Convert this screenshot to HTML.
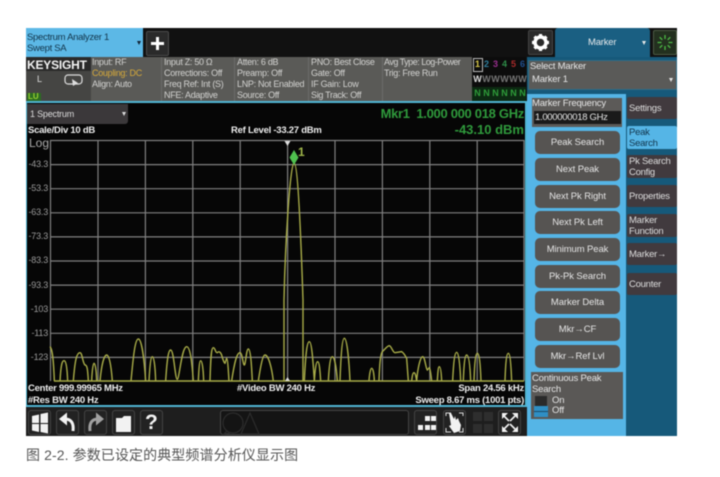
<!DOCTYPE html>
<html><head><meta charset="utf-8"><style>
html,body{margin:0;padding:0;background:#fff}
body{width:720px;height:477px;overflow:hidden;position:relative;font-family:"Liberation Sans","Noto Sans CJK SC",sans-serif}
#s{position:absolute;left:0;top:0;width:720px;height:477px;filter:blur(.45px)}
.b{position:absolute}
.t{position:absolute;white-space:nowrap;line-height:1}
.i{font-size:9px;color:#d2d2d0;letter-spacing:-.3px}
.l{font-size:9px;color:#9a9a9a;text-align:right;width:30px;left:18px;letter-spacing:-.2px}
.w{font-size:9.5px;font-weight:bold;color:#eee;letter-spacing:-.25px}
.p{font-size:9.5px;color:#e6e6e6;letter-spacing:-.2px}
.btn{position:absolute;left:535px;width:85px;height:23px;background:#565452;border-radius:5px;color:#e4e4e4;font-size:9.5px;letter-spacing:-.1px;line-height:23px;text-align:center}
.tab{position:absolute;left:627px;width:50px;background:#413a3e;border-radius:2px;color:#ddd;font-size:9.5px;letter-spacing:-.25px;line-height:11px;box-sizing:border-box;padding-left:2px;display:flex;align-items:center}
.tb{position:absolute;top:410px;height:25px;background:#222;border:1px solid #444;border-radius:3px;box-sizing:border-box}
.n{position:absolute;font-size:9px;font-weight:bold;line-height:1;width:9px;text-align:center}
</style></head><body><div id="s">
<div class="b" style="left:26px;top:28px;width:651px;height:408px;background:#111"></div>
<!-- top bar -->
<div class="b" style="left:26px;top:28px;width:117px;height:29px;background:#5cb8e6"></div>
<div class="t" style="left:27px;top:32px;font-size:9.5px;letter-spacing:-.3px;color:#12344a;line-height:11px">Spectrum Analyzer 1<br>Swept SA</div>
<div class="b" style="left:137px;top:41px;width:0;height:0;border:2.5px solid transparent;border-top:4px solid #123;"></div>
<div class="b" style="left:146px;top:31px;width:23px;height:25px;background:#2a2a2a;border:1px solid #4a4a4a;box-sizing:border-box;border-radius:2px"></div>
<div class="b" style="left:151px;top:42px;width:13px;height:3px;background:#fff"></div>
<div class="b" style="left:156px;top:37px;width:3px;height:13px;background:#fff"></div>
<div class="b" style="left:528px;top:30px;width:25px;height:25px;background:#2a2a2a;border:1px solid #444;box-sizing:border-box;border-radius:2px"></div>
<svg class="b" style="left:528px;top:30px" width="25" height="25" viewBox="0 0 25 25"><circle cx="12.5" cy="12.500" r="5.500" fill="none" stroke="#fff" stroke-width="3.500"/><g stroke="#fff" stroke-width="3.200"><path d="M12.500 4v3M12.500 18v3M4 12.500h3M18 12.500h3M6.500 6.500l2.200 2.200M16.300 16.300l2.200 2.200M6.500 18.500l2.200-2.200M16.300 8.700l2.200-2.200"/></g></svg>
<div class="b" style="left:555px;top:28px;width:95px;height:29px;background:#1a5f82;border-radius:3px 3px 0 0"></div>
<div class="t p" style="left:588px;top:38px;color:#e4e8ea">Marker</div>
<div class="b" style="left:642px;top:41px;width:0;height:0;border:2.5px solid transparent;border-top:4px solid #e8e8e8"></div>
<div class="b" style="left:653px;top:30px;width:24px;height:25px;background:#23301f;border:1px solid #4c5a44;box-sizing:border-box;border-radius:2px"></div>
<svg class="b" style="left:653px;top:30px" width="24" height="25" viewBox="0 0 24 25"><g stroke="#4dbb45" stroke-width="1.300"><path d="M12 5v4M12 16v4M4.500 12.500h4M15.500 12.500h4M6.700 7.200l2.600 2.600M14.700 15.200l2.600 2.600M6.700 17.800l2.600-2.600M14.700 9.800l2.600-2.600"/></g></svg>
<!-- info bar -->
<div class="b" style="left:26px;top:57px;width:446px;height:44px;background:#5a5a57"></div>
<div class="b" style="left:26px;top:57px;width:65px;height:44px;background:#454543"></div>
<div class="b" style="left:26px;top:57px;width:65px;height:14px;background:#2a2a2a"></div>
<div class="t" style="left:27px;top:59px;font-size:12px;font-weight:bold;color:#f2f2f2;letter-spacing:-.2px">KEYSIGHT</div>
<div class="t" style="left:37px;top:75px;font-size:9px;color:#ddd">L</div>
<svg class="b" style="left:64px;top:73px" width="20" height="15"><rect x="1" y="2" width="17" height="9" rx="3" fill="none" stroke="#ddd" stroke-width="1.200"/><path d="M8 6l6 4-5 3z" fill="#ddd"/></svg>
<div class="b" style="left:27px;top:93px;width:14px;height:8px;background:#2c6b22"></div>
<div class="t" style="left:28px;top:93px;font-size:8px;color:#9bd02f;font-weight:bold">LU</div>
<div class="b" style="left:161px;top:57px;width:1px;height:44px;background:#6c6c6a"></div>
<div class="b" style="left:234px;top:57px;width:1px;height:44px;background:#6c6c6a"></div>
<div class="b" style="left:308px;top:57px;width:1px;height:44px;background:#6c6c6a"></div>
<div class="b" style="left:382px;top:57px;width:1px;height:44px;background:#6c6c6a"></div>
<div class="t i" style="left:92px;top:58px">Input: RF</div>
<div class="t i" style="left:92px;top:69px;color:#d6a93a">Coupling: DC</div>
<div class="t i" style="left:92px;top:80px">Align: Auto</div>
<div class="t i" style="left:164px;top:58px">Input Z: 50 Ω</div>
<div class="t i" style="left:164px;top:69px">Corrections: Off</div>
<div class="t i" style="left:164px;top:80px">Freq Ref: Int (S)</div>
<div class="t i" style="left:164px;top:91px">NFE: Adaptive</div>
<div class="t i" style="left:237px;top:58px">Atten: 6 dB</div>
<div class="t i" style="left:237px;top:69px">Preamp: Off</div>
<div class="t i" style="left:237px;top:80px">LNP: Not Enabled</div>
<div class="t i" style="left:237px;top:91px">Source: Off</div>
<div class="t i" style="left:311px;top:58px">PNO: Best Close</div>
<div class="t i" style="left:311px;top:69px">Gate: Off</div>
<div class="t i" style="left:311px;top:80px">IF Gain: Low</div>
<div class="t i" style="left:311px;top:91px">Sig Track: Off</div>
<div class="t i" style="left:384px;top:58px;letter-spacing:-.5px">Avg Type: Log-Power</div>
<div class="t i" style="left:384px;top:69px">Trig: Free Run</div>
<!-- status -->
<div class="b" style="left:472px;top:57px;width:54px;height:44px;background:#0c0c0c"></div>
<div class="b" style="left:473px;top:58px;width:10px;height:14px;border:1px solid #bbb;box-sizing:border-box"></div>
<div class="n" style="left:473px;top:60px;color:#d9c94a">1</div><div class="n" style="left:482px;top:60px;color:#2f7f9f">2</div><div class="n" style="left:491px;top:60px;color:#9a2f8f">3</div><div class="n" style="left:500px;top:60px;color:#2f8f4a">4</div><div class="n" style="left:509px;top:60px;color:#a82a2a">5</div><div class="n" style="left:518px;top:60px;color:#1f4f8f">6</div>
<div class="n" style="left:473px;top:75px;color:#ddd">W</div><div class="n" style="left:482px;top:75px;color:#777">W</div><div class="n" style="left:491px;top:75px;color:#777">W</div><div class="n" style="left:500px;top:75px;color:#777">W</div><div class="n" style="left:509px;top:75px;color:#777">W</div><div class="n" style="left:518px;top:75px;color:#777">W</div>
<div class="b" style="left:472px;top:87px;width:54px;height:14px;background:#0c2a12"></div>
<div class="n" style="left:473px;top:89px;color:#2f9e3a">N</div><div class="n" style="left:482px;top:89px;color:#2f9e3a">N</div><div class="n" style="left:491px;top:89px;color:#2f9e3a">N</div><div class="n" style="left:500px;top:89px;color:#2f9e3a">N</div><div class="n" style="left:509px;top:89px;color:#2f9e3a">N</div><div class="n" style="left:518px;top:89px;color:#2f9e3a">N</div>
<!-- chart -->
<div class="b" style="left:26px;top:101px;width:501px;height:306px;background:#060606;border:2px solid #4fb4d2;border-width:2px 2px 2px 1px;box-sizing:border-box"></div>
<div class="b" style="left:27px;top:104px;width:101px;height:20px;background:#3b383a;border-radius:0 0 3px 0"></div>
<div class="t" style="left:30px;top:110px;font-size:9px;letter-spacing:-.2px;color:#ddd">1 Spectrum</div>
<div class="b" style="left:122px;top:112px;width:0;height:0;border:2.5px solid transparent;border-top:4px solid #ddd"></div>
<div class="t w" style="left:28px;top:126px">Scale/Div 10 dB</div>
<div class="t w" style="left:231px;top:126px">Ref Level -33.27 dBm</div>
<div class="t" style="right:196px;top:107px;font-size:13px;letter-spacing:-.3px;font-weight:bold;color:#2f9a3c">Mkr1&nbsp; 1.000 000 018 GHz</div>
<div class="t" style="right:196px;top:123px;font-size:13px;font-weight:bold;color:#2f9a3c">-43.10 dBm</div>
<div class="t" style="left:29px;top:137px;font-size:12px;color:#aaa">Log</div>
<div class="t l" style="top:160px">-43.3</div><div class="t l" style="top:184px">-53.3</div><div class="t l" style="top:208px">-63.3</div><div class="t l" style="top:232px">-73.3</div><div class="t l" style="top:256px">-83.3</div><div class="t l" style="top:281px">-93.3</div><div class="t l" style="top:305px">-103</div><div class="t l" style="top:329px">-113</div><div class="t l" style="top:353px">-123</div>
<svg class="b" style="left:0;top:0" width="720" height="477" viewBox="0 0 720 477">
<g stroke="#808080" stroke-width="1.200" fill="none">
<path d="M50 140.500H524M50 164.600H524M50 188.700H524M50 212.800H524M50 236.900H524M50 261H524M50 285.100H524M50 309.200H524M50 333.300H524M50 357.400H524"/>
<path d="M50.500 140V381M98 140V381M145.400 140V381M192.800 140V381M240.200 140V381M287.600 140V381M335 140V381M382.400 140V381M429.800 140V381M477.200 140V381M524 140V381"/>
</g>
<g fill="none" stroke="#a8ac48" stroke-width="1.400">
<path d="M54 381H524"/>
<path d="M284 381V300C285 250 290 163 294 163C298 163 301 240 303 300V381"/>
<g transform="translate(25 300) scale(.3333)" stroke-width="4.200">
<path d="M75,140C80,145 85,160 88,243"/>
<path d="M105,243C108,190 112,182 117,182C122,182 126,195 128,243"/>
<path d="M145,243C150,180 155,158 165,158C172,158 173,190 180,195C186,195 188,205 190,243"/>
<path d="M200,243C202,200 205,190 207,190C211,190 214,210 215,243"/>
<path d="M225,243C230,190 238,165 245,165C252,165 258,190 262,243"/>
<path d="M318,243C325,170 330,117 340,117C350,117 358,180 362,243"/>
<path d="M372,243C375,190 378,170 382,170C388,170 391,210 392,243"/>
<path d="M422,243C426,180 430,150 437,150C447,150 450,238 457,238C463,238 470,140 485,140C497,140 502,200 505,243"/>
<path d="M520,243C522,200 524,182 527,182C532,182 535,210 536,243"/>
<path d="M555,243C557,180 558,143 565,143C571,143 571,160 577,158C582,153 586,155 590,165C594,180 598,190 600,190L605,175C608,175 610,210 612,243"/>
<path d="M620,243C628,190 635,158 645,158C652,158 654,195 658,195C662,195 664,147 670,147C677,147 680,200 682,243"/>
<path d="M700,243C708,190 714,165 720,165C730,165 740,200 745,243"/>
</g>
<g transform="translate(275 300) scale(.3333)" stroke-width="4.200">
<path d="M88,243C92,160 96,125 103,125C110,125 114,180 118,243C121,200 124,185 128,185C133,185 135,210 137,243"/>
<path d="M160,243C163,190 167,170 172,170C178,170 184,200 187,243"/>
<path d="M195,243C198,160 202,115 208,115C216,115 222,180 225,243"/>
<path d="M282,243C284,215 287,205 290,205C294,205 297,220 298,243"/>
<path d="M312,243C314,190 316,165 322,155C330,148 337,137 343,137C350,140 354,158 360,158L380,155C388,160 392,170 395,175L400,243"/>
<path d="M410,243C412,225 414,218 417,218C421,218 423,230 425,243C428,205 436,170 443,170C450,170 452,205 457,210L463,203C466,205 468,225 470,243"/>
<path d="M487,243C489,210 490,200 493,200C497,200 499,220 500,243"/>
<path d="M533,243C536,180 540,157 545,157C551,157 555,190 557,243"/>
<path d="M565,243C567,190 570,165 575,165C581,165 585,190 587,243"/>
<path d="M597,243C599,185 602,160 607,160C613,160 616,190 618,243"/>
<path d="M690,243C692,185 695,160 700,160C705,160 708,190 710,243"/>
</g>
</g>
<path d="M284.500 141h6l-3 5z" fill="#ddd"/>
<path d="M285 381l2.500-4 2.500 4z" fill="#ddd"/>
<path d="M294 150l4.500 7.500-4.500 7.500-4.500-7.500z" fill="#4fc04f"/>
</svg>
<div class="t" style="left:298px;top:146px;font-size:12px;font-weight:bold;color:#9fb64a">1</div>
<div class="t w" style="left:28px;top:384px">Center 999.99965 MHz</div>
<div class="t w" style="left:28px;top:396px">#Res BW 240 Hz</div>
<div class="t w" style="left:237px;top:384px">#Video BW 240 Hz</div>
<div class="t w" style="right:196px;top:384px">Span 24.56 kHz</div>
<div class="t w" style="right:196px;top:396px">Sweep 8.67 ms (1001 pts)</div>
<!-- toolbar -->
<div class="b" style="left:26px;top:407px;width:501px;height:29px;background:#1e1e1e"></div>
<div class="tb" style="left:28px;width:23px"></div><div class="tb" style="left:56px;width:23px"></div><div class="tb" style="left:84px;width:23px"></div><div class="tb" style="left:112px;width:23px"></div><div class="tb" style="left:140px;width:23px"></div>
<div class="tb" style="left:220px;width:189px;background:#141414"></div>
<div class="tb" style="left:414px;width:23px"></div><div class="tb" style="left:443px;width:23px"></div><div class="tb" style="left:498px;width:23px"></div>
<svg class="b" style="left:0;top:0" width="720" height="477" viewBox="0 0 720 477">
<path d="M32 416l7-1.500v8.500h-7zM40.500 414l7.500-1.500v10.500h-7.500zM32 424h7v8l-7-1.500zM40.500 424h7.500v9.500l-7.500-1.500z" fill="#f2f2f2"/>
<path d="M59 419l8-6.500v13z" fill="#f2f2f2"/><path d="M65 419c6 0 9 4 8 12" fill="none" stroke="#f2f2f2" stroke-width="3"/>
<path d="M104 419l-8-6.500v13z" fill="#a0a0a0"/><path d="M98 419c-6 0-9 4-8 12" fill="none" stroke="#a0a0a0" stroke-width="3"/>
<path d="M116 418h6l2-2h7v16h-15z" fill="#f2f2f2"/>
<g fill="none" stroke="#2c2c2c" stroke-width="1.200"><circle cx="233" cy="423" r="10"/><path d="M227 431l-3 3 6-1"/><path d="M241 434l9-21 9 21z"/></g>
<g fill="#f2f2f2"><rect x="425" y="416" width="5" height="5"/><rect x="431" y="416" width="5" height="5"/><rect x="418" y="425" width="5" height="5"/><rect x="425" y="425" width="5" height="5"/><rect x="431" y="425" width="5" height="5"/></g>
<g fill="none" stroke="#ddd" stroke-width="1"><path d="M446 416v-3h5M459 413h4v3M446 428v4h5M463 428v4h-4"/></g>
<path d="M449 413l2 0 3 6 1-3 1 4 2-2 1 3 2 4-1 6-6 2-5-7 2-1z" fill="#f2f2f2"/>
<g fill="#2e2e2e"><rect x="473" y="412" width="9" height="9"/><rect x="484" y="412" width="9" height="9"/><rect x="473" y="424" width="9" height="9"/><rect x="484" y="424" width="9" height="9"/></g>
<g stroke="#f2f2f2" stroke-width="1.600" fill="#f2f2f2"><path d="M504 416l5 5M515 416l-5 5M504 429l5-5M515 429l-5-5"/><path d="M502 413h6l-6 6zM518 413h-6l6 6zM502 432h6l-6-6zM518 432h-6l6-6z" stroke="none"/></g>
</svg>
<div class="t" style="left:145px;top:412px;font-size:21px;font-weight:bold;color:#f2f2f2">?</div>
<!-- right panel -->
<div class="b" style="left:527px;top:57px;width:150px;height:379px;background:#16597a"></div>
<div class="b" style="left:528px;top:60px;width:149px;height:30px;background:#5a5a58;border:1px solid #2f6b85;box-sizing:border-box"></div>
<div class="t p" style="left:530px;top:62px">Select Marker</div>
<div class="t p" style="left:532px;top:75px">Marker 1</div>
<div class="b" style="left:669px;top:78px;width:0;height:0;border:2.500px solid transparent;border-top:4px solid #e4e4e4"></div>
<div class="b" style="left:527px;top:94px;width:99px;height:342px;background:#55b5e6"></div>
<div class="b" style="left:532px;top:98px;width:90px;height:29px;background:#5c5a58"></div>
<div class="t p" style="left:532px;top:99px">Marker Frequency</div>
<div class="b" style="left:534px;top:111px;width:87px;height:13px;background:#1a1a1a"></div>
<div class="t p" style="left:535px;top:113px;letter-spacing:-.3px">1.000000018 GHz</div>
<div class="btn" style="top:131px">Peak Search</div>
<div class="btn" style="top:158px">Next Peak</div>
<div class="btn" style="top:185px">Next Pk Right</div>
<div class="btn" style="top:211px">Next Pk Left</div>
<div class="btn" style="top:238px">Minimum Peak</div>
<div class="btn" style="top:265px">Pk-Pk Search</div>
<div class="btn" style="top:291px">Marker Delta</div>
<div class="btn" style="top:318px">Mkr→CF</div>
<div class="btn" style="top:345px">Mkr→Ref Lvl</div>
<div class="b" style="left:531px;top:372px;width:92px;height:47px;background:#5a5856"></div>
<div class="t p" style="left:532px;top:373px;line-height:11px">Continuous Peak<br>Search</div>
<div class="b" style="left:535px;top:396px;width:12px;height:10px;background:#2a2a2a"></div>
<div class="b" style="left:534px;top:406px;width:14px;height:11px;background:#2f8fc4"></div>
<div class="b" style="left:534px;top:411px;width:14px;height:1px;background:#1a4a66"></div>
<div class="t p" style="left:552px;top:396px">On</div>
<div class="t p" style="left:552px;top:406px">Off</div>
<div class="tab" style="top:97px;height:22px">Settings</div>
<div class="tab" style="top:126px;height:23px;background:#55b5e6;color:#12344a">Peak<br>Search</div>
<div class="tab" style="top:155px;height:23px">Pk Search<br>Config</div>
<div class="tab" style="top:185px;height:22px">Properties</div>
<div class="tab" style="top:214px;height:23px">Marker<br>Function</div>
<div class="tab" style="top:243px;height:22px">Marker→</div>
<div class="tab" style="top:273px;height:22px">Counter</div>
<!-- caption -->
<div class="t" style="left:26px;top:448px;font-size:14px;color:#555;letter-spacing:.1px">图 2-2. 参数已设定的典型频谱分析仪显示图</div>
</div></body></html>
